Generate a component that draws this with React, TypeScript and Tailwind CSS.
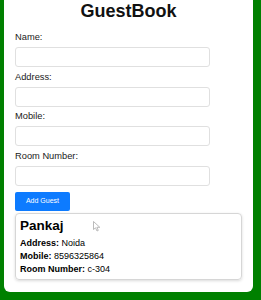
import React, { useState } from 'react';

interface Guest {
  name: string;
  address: string;
  mobile: string;
  room: string;
}

const fields = [
  { key: 'name', label: 'Name:' },
  { key: 'address', label: 'Address:' },
  { key: 'mobile', label: 'Mobile:' },
  { key: 'room', label: 'Room Number:' },
] as const;

export default function App() {
  const [form, setForm] = useState<Guest>({ name: '', address: '', mobile: '', room: '' });
  const [guests, setGuests] = useState<Guest[]>([
    { name: 'Pankaj', address: 'Noida', mobile: '8596325864', room: 'c-304' },
  ]);

  const addGuest = () => {
    if (!form.name) return;
    setGuests([...guests, form]);
    setForm({ name: '', address: '', mobile: '', room: '' });
  };

  return (
    <div className="min-h-[300px] bg-[#008000] pl-[4px] pr-[8px] pb-[9px] font-['Liberation_Sans',Arial,sans-serif] text-black">
      <div className="bg-white rounded-b-[6px] px-[11px] pb-[12px]">
        <h1 className="text-center text-[18px] leading-[22px] font-bold text-[#111]">GuestBook</h1>

        {/* Form */}
        <div className="mt-[10px]">
          {fields.map((f) => (
            <div key={f.key} className="mb-[4.5px]">
              <label className="block text-[9.3px] leading-[11px] mb-[4px] text-[#1a1a1a]">{f.label}</label>
              <input
                type="text"
                value={form[f.key]}
                onChange={(e) => setForm({ ...form, [f.key]: e.target.value })}
                className="block w-[195px] h-[20px] border border-[#e0e0e0] rounded-[3px] px-1 text-[9px] outline-none"
              />
            </div>
          ))}
          <button
            onClick={addGuest}
            className="block mt-[6px] w-[55px] h-[19px] bg-[#0d7bff] text-white text-[7px] rounded-[2px]"
          >
            Add Guest
          </button>
        </div>

        {/* Guest list */}
        <div className="mt-[2px] relative flex flex-col gap-2">
          {guests.map((g, i) => (
            <div
              key={i}
              className="border border-[#d6d6d6] rounded-[4px] shadow-[0_1px_3px_rgba(0,0,0,0.15)] px-[4px] pt-[4px] pb-[3px]"
            >
              <h3 className="text-[13.5px] leading-[16px] font-bold">{g.name}</h3>
              <p className="text-[9px] leading-[13px] mt-[3px]"><b>Address:</b> {g.address}</p>
              <p className="text-[9px] leading-[13px]"><b>Mobile:</b> {g.mobile}</p>
              <p className="text-[9px] leading-[13px]"><b>Room Number:</b> {g.room}</p>
            </div>
          ))}
          <svg className="absolute left-[78px] top-[8px]" width="8" height="11" viewBox="0 0 8 11">
            <path d="M0.5 0.5 L0.5 8.5 L2.5 6.8 L4 10 L5.3 9.4 L3.9 6.3 L6.8 6.3 Z" fill="white" stroke="#aaa" strokeWidth="0.8" />
          </svg>
        </div>
      </div>
    </div>
  );
}
